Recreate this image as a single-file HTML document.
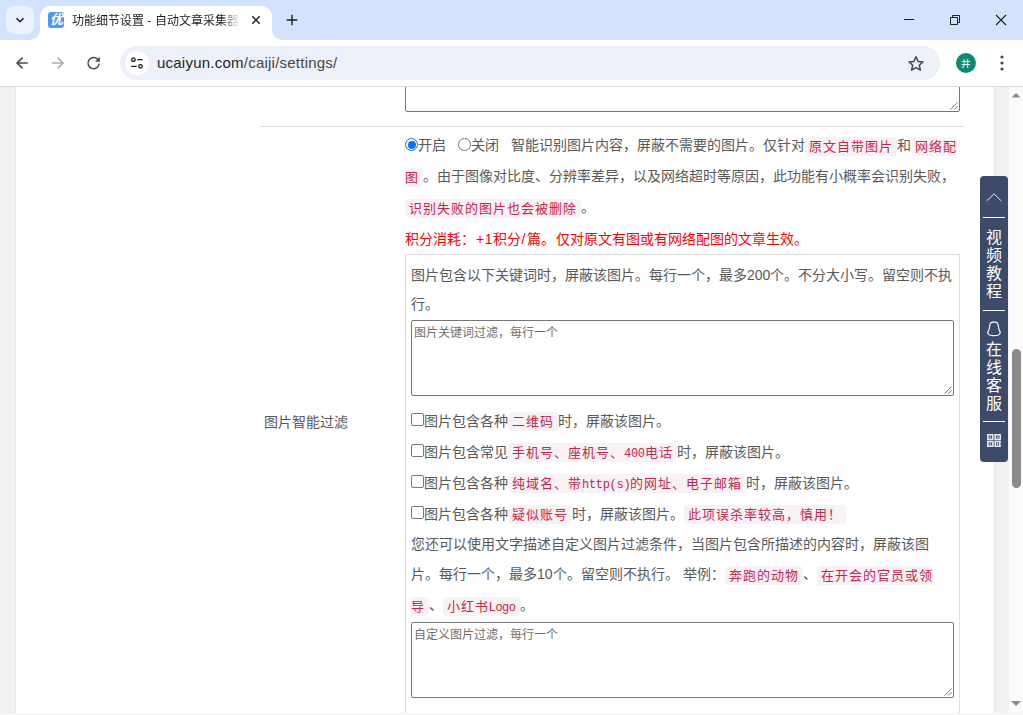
<!DOCTYPE html>
<html lang="zh-CN"><head><meta charset="utf-8">
<style>
*{box-sizing:border-box}
html,body{margin:0;padding:0;width:1023px;height:715px;overflow:hidden;background:#fff;font-family:"Liberation Sans",sans-serif}
.abs{position:absolute}
#tabbar{position:absolute;left:0;top:0;width:1023px;height:40px;background:#d3e3fd}
#toolbar{position:absolute;left:0;top:40px;width:1023px;height:46px;background:#fff;border-radius:6px 6px 0 0}
#tbline{position:absolute;left:0;top:86px;width:1023px;height:1px;background:#d9d9d9}
#page{position:absolute;left:0;top:87px;width:1023px;height:626px;background:#fff;overflow:hidden}
.gstrip{position:absolute;top:0;height:626px;width:15px;background:#f1f1f1}
.t{position:absolute;white-space:nowrap;font-size:14px;color:#595959;line-height:20px;height:20px}
code{display:inline-block;height:19px;line-height:19px;padding:0 4px;background:#f9f2f4;color:#c7254e;border-radius:4px;font-family:"Liberation Sans",sans-serif;font-size:13px;letter-spacing:1px;vertical-align:top;margin-top:2px}
.g code{margin-top:1px}
code.cl{padding-right:0;border-radius:4px 0 0 4px}
code.cr{padding-left:0;border-radius:0 4px 4px 0}
code .l{font-family:"Liberation Mono",monospace;font-size:12px;letter-spacing:-0.3px}
code .p{letter-spacing:0;font-size:12px}
.ta{position:absolute;border:1px solid #767676;border-radius:2px;background:#fff}
.ph{position:absolute;left:2px;top:4px;font-size:12px;color:#6f6f6f;white-space:nowrap;line-height:16px}
.grip{position:absolute;right:1px;bottom:1px;width:9px;height:9px}
#bottomstrip{position:absolute;left:0;top:713px;width:1023px;height:2px;background:#f7f7f7}
.radio{display:inline-block;width:13px;height:13px;border-radius:50%;border:1px solid #767676;vertical-align:top;margin-top:3px;position:relative}
.radio.on{border:1px solid #0075ff;}
.radio.on:after{content:"";position:absolute;left:1.5px;top:1.5px;width:8px;height:8px;border-radius:50%;background:#0075ff}
.cb{display:inline-block;width:13px;height:13px;border-radius:2px;border:1px solid #767676;vertical-align:top;margin-top:2px}
</style></head><body>

<!-- ============ TAB BAR ============ -->
<div id="tabbar">
  <div class="abs" style="left:6px;top:6px;width:28px;height:28px;border-radius:8px;background:#ebf2fd"></div>
  <svg class="abs" style="left:14px;top:13.5px" width="12" height="12" viewBox="0 0 12 12"><path d="M2.5 4.2 L6 7.7 L9.5 4.2" fill="none" stroke="#1f1f1f" stroke-width="1.6"/></svg>
  <!-- active tab -->
  <div class="abs" style="left:40px;top:6px;width:232px;height:34px;background:#fff;border-radius:10px 10px 0 0"></div>
  <svg class="abs" style="left:30px;top:30px" width="10" height="10"><path d="M10 0 V10 H0 A10 10 0 0 0 10 0Z" fill="#fff"/></svg>
  <svg class="abs" style="left:272px;top:30px" width="10" height="10"><path d="M0 0 V10 H10 A10 10 0 0 1 0 0Z" fill="#fff"/></svg>
  <div class="abs" style="left:48px;top:12px;width:16px;height:16px;border-radius:3px;background:#4a9bf1;color:#fff;font-size:13px;line-height:16px;text-align:center;font-weight:bold;font-style:italic">优</div>
  <div class="abs" style="left:72px;top:11px;width:168px;height:20px;overflow:hidden;white-space:nowrap;font-size:12px;line-height:20px;color:#1f1f1f;-webkit-mask-image:linear-gradient(to right,#000 150px,transparent 168px)">功能细节设置 - 自动文章采集器</div>
  <svg class="abs" style="left:250px;top:14px" width="12" height="12" viewBox="0 0 12 12"><path d="M2.3 2.3 L9.7 9.7 M9.7 2.3 L2.3 9.7" stroke="#1f1f1f" stroke-width="1.4"/></svg>
  <svg class="abs" style="left:285px;top:13px" width="14" height="14" viewBox="0 0 14 14"><path d="M7 1.8 V12.2 M1.8 7 H12.2" stroke="#1f1f1f" stroke-width="1.4"/></svg>
  <!-- window controls -->
  <svg class="abs" style="left:903px;top:13px" width="12" height="12"><path d="M1 6.5 H11" stroke="#1f1f1f" stroke-width="1"/></svg>
  <svg class="abs" style="left:949px;top:14px" width="12" height="12"><path d="M1.5 3.5 H8.5 V10.5 H1.5Z M3.5 3.5 V1.5 H10.5 V8.5 H8.5" fill="none" stroke="#1f1f1f" stroke-width="1"/></svg>
  <svg class="abs" style="left:995px;top:14px" width="12" height="12"><path d="M1 1 L11 11 M11 1 L1 11" stroke="#1f1f1f" stroke-width="1.1"/></svg>
</div>

<!-- ============ TOOLBAR ============ -->
<div id="toolbar">
  <svg class="abs" style="left:14px;top:15px" width="16" height="16" viewBox="0 0 16 16"><path d="M13.8 8 H2.8 M8.6 2.6 L3.1 8 L8.6 13.4" fill="none" stroke="#474747" stroke-width="1.6"/></svg>
  <svg class="abs" style="left:50px;top:15px" width="16" height="16" viewBox="0 0 16 16"><path d="M2.2 8 H13.2 M7.6 2.6 L13.1 8 L7.6 13.4" fill="none" stroke="#aaadb2" stroke-width="1.6"/></svg>
  <svg class="abs" style="left:86px;top:15px" width="16" height="16" viewBox="0 0 16 16"><path d="M13.2 8.6 A5.6 5.6 0 1 1 11.6 4.1" fill="none" stroke="#474747" stroke-width="1.5"/><path d="M9 6.7 H13.9 V1.8Z" fill="#474747"/></svg>
  <div class="abs" style="left:120px;top:6px;width:820px;height:34px;border-radius:17px;background:#ebf0f9"></div>
  <div class="abs" style="left:125px;top:11px;width:24px;height:24px;border-radius:12px;background:#fff"></div>
  <svg class="abs" style="left:129px;top:15px" width="16" height="16" viewBox="0 0 16 16"><circle cx="4.4" cy="4.7" r="1.75" fill="none" stroke="#1f1f1f" stroke-width="1.3"/><path d="M8.2 4.6 H13.6 M2.1 11.3 H7.6" stroke="#1f1f1f" stroke-width="1.3"/><circle cx="11.5" cy="11.3" r="1.75" fill="none" stroke="#1f1f1f" stroke-width="1.3"/></svg>
  <div class="abs" style="left:157px;top:12px;font-size:15px;line-height:22px;color:#1f1f1f;white-space:nowrap;letter-spacing:0.23px">ucaiyun.com<span style="color:#474747">/caiji/settings/</span></div>
  <svg class="abs" style="left:907px;top:14.5px" width="18" height="18" viewBox="0 0 18 18"><path d="M9 1.8 L11.1 6.4 L16 6.9 L12.3 10.2 L13.4 15.1 L9 12.6 L4.6 15.1 L5.7 10.2 L2 6.9 L6.9 6.4Z" fill="none" stroke="#474747" stroke-width="1.5" stroke-linejoin="round"/></svg>
  <div class="abs" style="left:956px;top:13px;width:20px;height:20px;border-radius:10px;background:#0c8a76;color:#fff;font-size:9.5px;line-height:21px;text-align:center">井</div>
  <svg class="abs" style="left:996px;top:13px" width="12" height="20"><circle cx="6" cy="4" r="1.6" fill="#474747"/><circle cx="6" cy="10" r="1.6" fill="#474747"/><circle cx="6" cy="16" r="1.6" fill="#474747"/></svg>
</div>
<div id="tbline"></div>

<!-- ============ PAGE ============ -->
<div id="page">
  <div class="gstrip" style="left:0;border-right:1px solid #e7e7e7;width:16px"></div>
  <div class="gstrip" style="left:994px;border-left:1px solid #e7e7e7"></div>
  <!-- scrollbar -->
  <div class="abs" style="left:1009px;top:0;width:14px;height:626px;background:#fbfbfb"></div>
  <svg class="abs" style="left:1011px;top:5px" width="10" height="6"><path d="M0.5 5.5 L5 1 L9.5 5.5Z" fill="#8b8b8b"/></svg>
  <svg class="abs" style="left:1011px;top:614px" width="10" height="6"><path d="M0 0 L5 5 L10 0Z" fill="#8b8b8b"/></svg>
  <div class="abs" style="left:1012px;top:262px;width:9px;height:139px;border-radius:5px;background:#8b8b8b"></div>

  <!-- previous textarea -->
  <div class="ta" style="left:405px;top:-20px;width:555px;height:45px"><svg class="grip" width="9" height="9" viewBox="0 0 9 9"><path d="M1.5 8.6 L8.6 1.5 M5.2 8.6 L8.6 5.2" stroke="#707070" stroke-width="0.95"/></svg></div>
  <!-- hr -->
  <div class="abs" style="left:260px;top:39px;width:704px;height:1px;background:#ddd"></div>


  <!-- row content -->
  <div class="t" style="left:405px;top:48px"><span class="radio on"></span>开启<span class="radio" style="margin-left:12px"></span>关闭<span style="margin-left:12px">智能识别图片内容，屏蔽不需要的图片。仅针对</span><code>原文自带图片</code>和<code class="cl">网络配</code></div>
  <div class="t" style="left:405px;top:79px"><code class="cr">图</code>。由于图像对比度、分辨率差异，以及网络超时等原因，此功能有小概率会识别失败，</div>
  <div class="t" style="left:405px;top:110px"><code>识别失败的图片也会被删除</code>。</div>
  <div class="t" style="left:405px;top:142px;color:#f00">积分消耗<span style="letter-spacing:1px">：</span><span style="letter-spacing:.5px">+1</span>积分<span style="letter-spacing:.5px;margin:0 1.2px 0 .5px">/</span>篇<span style="letter-spacing:1px">。</span>仅对原文有图或有网络配图的文章生效。</div>

  <!-- box -->
  <div class="abs" style="left:405px;top:167px;width:555px;height:600px;border:1px solid #ddd"></div>
  <div class="t" style="left:411px;top:178px">图片包含以下关键词时，屏蔽该图片。每行一个，最多200个。不分大小写。留空则不执</div>
  <div class="t" style="left:411px;top:207px">行。</div>
  <div class="ta" style="left:411px;top:233px;width:543px;height:76px"><div class="ph">图片关键词过滤，每行一个</div><svg class="grip" width="9" height="9" viewBox="0 0 9 9"><path d="M1.5 8.6 L8.6 1.5 M5.2 8.6 L8.6 5.2" stroke="#707070" stroke-width="0.95"/></svg></div>
  <div class="t g" style="left:411px;top:324px"><span class="cb"></span>图片包含各种<code>二维码</code>时，屏蔽该图片。</div>
  <div class="t g" style="left:411px;top:355px"><span class="cb"></span>图片包含常见<code>手机号、座机号、<span class="l">400</span>电话</code>时，屏蔽该图片。</div>
  <div class="t g" style="left:411px;top:386px"><span class="cb"></span>图片包含各种<code>纯域名、带<span class="l">http(s)</span>的网址、电子邮箱</code>时，屏蔽该图片。</div>
  <div class="t g" style="left:411px;top:417px"><span class="cb"></span>图片包含各种<code>疑似账号</code>时，屏蔽该图片。<code>此项误杀率较高，慎用！</code></div>
  <div class="t" style="left:411px;top:447px">您还可以使用文字描述自定义图片过滤条件，当图片包含所描述的内容时，屏蔽该图</div>
  <div class="t" style="left:411px;top:477px">片。每行一个，最多10个。留空则不执行。<span style="letter-spacing:1px"> </span>举例：<code>奔跑的动物</code>、<code class="cl">在开会的官员或领</code></div>
  <div class="t" style="left:411px;top:508px"><code class="cr">导</code>、<code>小红书<span class="p">Logo</span></code>。</div>
  <div class="ta" style="left:411px;top:535px;width:543px;height:76px"><div class="ph">自定义图片过滤，每行一个</div><svg class="grip" width="9" height="9" viewBox="0 0 9 9"><path d="M1.5 8.6 L8.6 1.5 M5.2 8.6 L8.6 5.2" stroke="#707070" stroke-width="0.95"/></svg></div>

  <!-- label -->
  <div class="t" style="left:264px;top:325px">图片智能过滤</div>
</div>


<!-- ============ SIDE PANEL ============ -->
<div class="abs" style="left:980px;top:176px;width:28px;height:286px;background:#3b4b69;border-radius:4px">
  <svg class="abs" style="left:6px;top:17px" width="16" height="9" viewBox="0 0 16 9"><path d="M0.8 7.8 L8 0.8 L15.2 7.8" fill="none" stroke="#fff" stroke-width="0.9"/></svg>
  <div class="abs" style="left:3px;top:41px;width:22px;height:1px;background:#fff"></div>
  <div class="abs" style="left:6px;top:53px;width:16px;font-size:16px;line-height:18px;color:#fff">视频教程</div>
  <div class="abs" style="left:3px;top:134px;width:22px;height:1px;background:#fff"></div>
  <svg class="abs" style="left:6px;top:145px" width="16" height="16" viewBox="0 0 16 16"><path d="M6.2 1.1 H9.8 Q11.5 1.1 12 3.4 L13 8.6 Q14.6 10.8 14 12.6 Q13.2 14.6 8 14.6 Q2.8 14.6 2 12.6 Q1.4 10.8 3 8.6 L4 3.4 Q4.5 1.1 6.2 1.1Z" fill="none" stroke="#fff" stroke-width="1.15"/></svg>
  <div class="abs" style="left:6px;top:164.5px;width:16px;font-size:16px;line-height:18px;color:#fff">在线客服</div>
  <div class="abs" style="left:3px;top:245px;width:22px;height:1px;background:#fff"></div>
  <svg class="abs" style="left:7px;top:258px" width="14" height="13" viewBox="0 0 14 13">
    <g fill="none" stroke="#e6e6e6" stroke-width="1.6"><rect x="0.8" y="0.8" width="5" height="4.6"/><rect x="8.2" y="0.8" width="5" height="4.6"/><rect x="0.8" y="7.6" width="5" height="4.6"/></g>
    <g fill="#e6e6e6"><rect x="2.6" y="2.4" width="1.4" height="1.4"/><rect x="10" y="2.4" width="1.4" height="1.4"/><rect x="2.6" y="9.2" width="1.4" height="1.4"/>
    <rect x="7.4" y="6.8" width="1.6" height="6.2"/><rect x="9" y="6.8" width="4.6" height="1.6"/><rect x="12" y="6.8" width="1.6" height="6.2"/><rect x="9" y="11.4" width="4.6" height="1.6"/><rect x="9.8" y="9" width="1.4" height="1.6"/></g>
  </svg>
</div>

<div id="bottomstrip"></div>
</body></html>
